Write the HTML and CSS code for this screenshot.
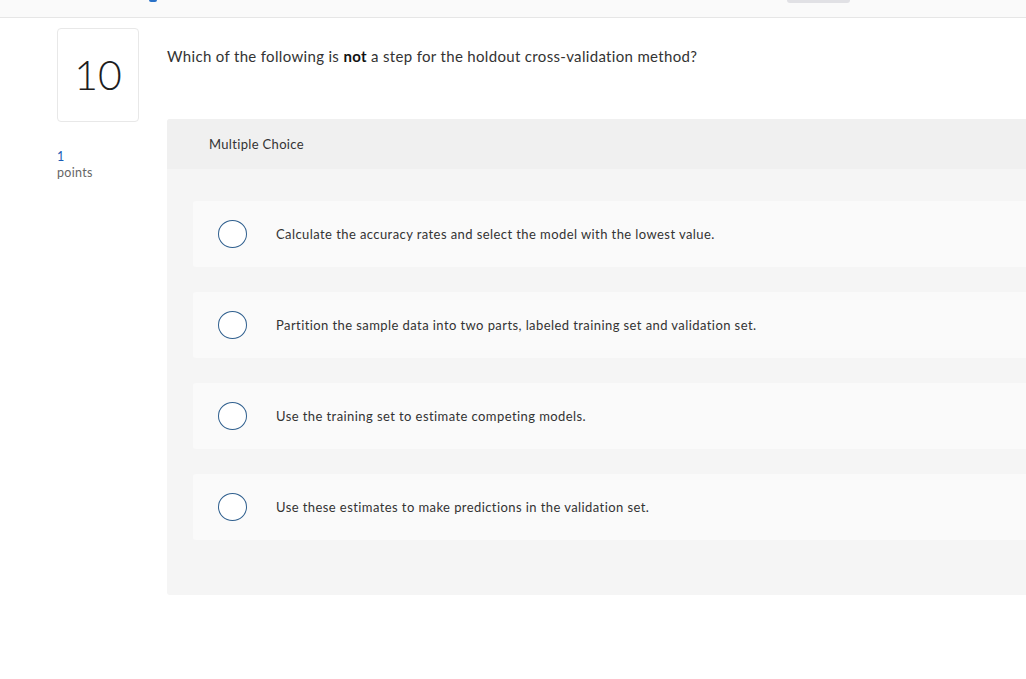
FILE: index.html
```html
<!DOCTYPE html>
<html>
<head>
<meta charset="utf-8">
<link rel="stylesheet" href="styles.css">
</head>
<body>
<div class="topbar">
  <span class="topbar-mark"></span>
  <span class="topbar-btn"></span>
</div>
<div class="page">
  <aside class="side">
    <div class="qnum">10</div>
    <div class="pts">
      <div class="pts-val">1</div>
      <div class="pts-label">points</div>
    </div>
  </aside>
  <main class="main">
    <p class="prompt">Which of the following is <b>not</b> a step for the holdout cross-validation method?</p>
    <section class="panel">
      <div class="panel-head">Multiple Choice</div>
      <div class="panel-body">
        <div class="opt"><span class="radio"></span><span class="opt-text">Calculate the accuracy rates and select the model with the lowest value.</span></div>
        <div class="opt"><span class="radio"></span><span class="opt-text">Partition the sample data into two parts, labeled training set and validation set.</span></div>
        <div class="opt"><span class="radio"></span><span class="opt-text">Use the training set to estimate competing models.</span></div>
        <div class="opt"><span class="radio"></span><span class="opt-text">Use these estimates to make predictions in the validation set.</span></div>
      </div>
    </section>
  </main>
</div>
</body>
</html>
```
FILE: styles.css
```css
html, body {
  margin: 0;
  padding: 0;
  background: #ffffff;
  overflow: hidden;
  font-family: "Lato", "Open Sans", "Liberation Sans", sans-serif;
  color: #333333;
}
.topbar {
  height: 17px;
  background: #fafafa;
  border-bottom: 1px solid #e6e6e6;
  display: flex;
  position: relative;
}
.topbar-mark {
  position: absolute;
  left: 149px;
  top: 0;
  width: 8px;
  height: 2px;
  background: #2a72c8;
  border-radius: 0 0 2px 2px;
}
.topbar-btn {
  position: absolute;
  left: 787px;
  top: 0;
  width: 63px;
  height: 3px;
  background: #e1e1e5;
  border-radius: 0 0 6px 6px;
}
.page {
  display: flex;
  padding: 10px 0 0 57px;
  width: 1100px;
}
.side {
  width: 82px;
  flex: none;
  margin-right: 28px;
}
.qnum {
  box-sizing: border-box;
  width: 82px;
  height: 94px;
  border: 1px solid #e8e8e8;
  border-radius: 4px;
  display: flex;
  align-items: center;
  justify-content: center;
  font-size: 41px;
  font-weight: 300;
  color: #1d1d1d;
  padding-bottom: 2px;
}
.pts {
  margin-top: 27px;
  font-size: 12.5px;
  line-height: 16px;
  letter-spacing: 0.3px;
}
.pts-val {
  color: #1a5bb5;
}
.pts-label {
  color: #666666;
}
.main {
  flex: none;
  width: 900px;
}
.prompt {
  margin: 18px 0 0 0;
  font-size: 15px;
  line-height: 20px;
  letter-spacing: 0.33px;
  color: #333333;
}
.prompt b {
  font-weight: 700;
  color: #111;
}
.panel {
  margin-top: 53px;
  background: #f5f5f5;
  border-radius: 3px;
}
.panel-head {
  height: 50px;
  background: #f0f0f0;
  border-radius: 3px 3px 0 0;
  display: flex;
  align-items: center;
  padding-left: 42px;
  font-size: 13px;
  letter-spacing: 0.33px;
  color: #333;
}
.panel-body {
  display: flex;
  flex-direction: column;
  gap: 25px;
  padding: 32px 0 55px 26px;
}
.opt {
  height: 66px;
  background: #fafafa;
  border-radius: 3px;
  display: flex;
  align-items: center;
  padding-left: 25px;
}
.radio {
  box-sizing: border-box;
  width: 29px;
  height: 28px;
  border: 1.5px solid #2f5f8e;
  border-radius: 50%;
  background: #ffffff;
  flex: none;
  margin-right: 29px;
}
.opt-text {
  font-size: 13px;
  letter-spacing: 0.42px;
  color: #333333;
}
```
